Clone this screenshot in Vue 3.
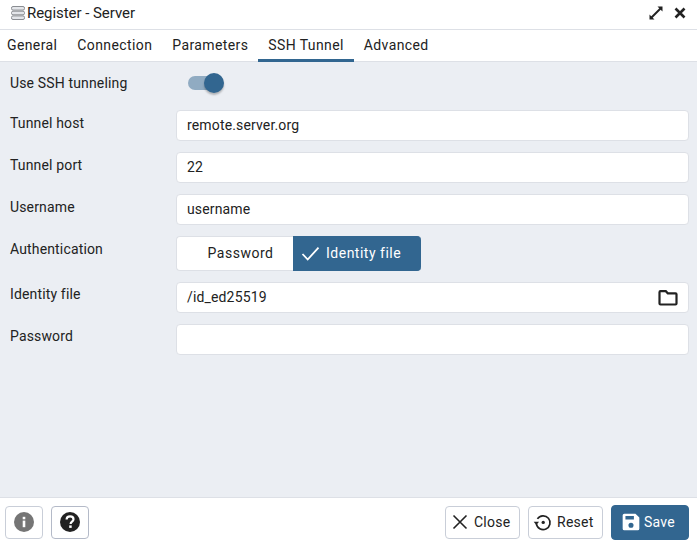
<template>
  <div class="dialog">
    <header class="title-bar">
      <div class="title">
        <svg class="server-icon" width="16" height="16" viewBox="0 0 16 16">
          <rect x="1.5" y="1.5" width="13" height="3.6" rx="1.5" />
          <rect x="1.5" y="6.2" width="13" height="3.6" rx="1.5" />
          <rect x="1.5" y="10.9" width="13" height="3.6" rx="1.5" />
        </svg>
        <span>Register - Server</span>
      </div>
      <div class="title-actions">
        <svg width="16" height="16" viewBox="0 0 16 16">
          <path d="M3.5 12.5 12.5 3.5" stroke="#222" stroke-width="2" fill="none" />
          <path d="M9.5 1.5h5v5zM1.5 9.5v5h5z" fill="#222" />
        </svg>
        <svg width="16" height="16" viewBox="0 0 16 16">
          <path d="M3.5 3.5l9 9M12.5 3.5l-9 9" stroke="#222" stroke-width="2.6" fill="none" />
        </svg>
      </div>
    </header>

    <nav class="tabs">
      <div v-for="tab in tabs" :key="tab" class="tab" :class="{ active: tab === 'SSH Tunnel' }">{{ tab }}</div>
    </nav>

    <main class="form">
      <div class="row switch-row">
        <label>Use SSH tunneling</label>
        <div class="switch">
          <div class="track"></div>
          <div class="thumb"></div>
        </div>
      </div>
      <div class="row">
        <label>Tunnel host</label>
        <div class="input">remote.server.org</div>
      </div>
      <div class="row">
        <label>Tunnel port</label>
        <div class="input">22</div>
      </div>
      <div class="row">
        <label>Username</label>
        <div class="input">username</div>
      </div>
      <div class="row">
        <label>Authentication</label>
        <div class="toggle">
          <div class="toggle-btn">Password</div>
          <div class="toggle-btn on">
            <svg width="20" height="20" viewBox="0 0 20 20">
              <path d="M1.5 11l5.2 5.5L17.5 4.6" stroke="#fff" stroke-width="1.8" fill="none" />
            </svg>
            <span>Identity file</span>
          </div>
        </div>
      </div>
      <div class="row low-label">
        <label>Identity file</label>
        <div class="input with-icon">
          <span>/id_ed25519</span>
          <svg width="24" height="24" viewBox="0 0 24 24">
            <path d="M3.5 6.2c0-.6.4-1 1-1h5.3l2 2.1h7.7c.6 0 1 .4 1 1v9.2c0 .6-.4 1-1 1h-15c-.6 0-1-.4-1-1z" fill="none" stroke="#222" stroke-width="2.2" />
          </svg>
        </div>
      </div>
      <div class="row low-label">
        <label>Password</label>
        <div class="input"></div>
      </div>
    </main>

    <footer class="footer">
      <div class="footer-group">
        <button class="icon-btn muted">
          <svg width="22" height="22" viewBox="0 0 22 22">
            <circle cx="11" cy="11" r="10" fill="#757575" />
            <rect x="9.7" y="9.6" width="2.6" height="6.6" fill="#fff" />
            <rect x="9.7" y="5.8" width="2.6" height="2.5" fill="#fff" />
          </svg>
        </button>
        <button class="icon-btn dark">
          <svg width="22" height="22" viewBox="0 0 22 22">
            <circle cx="11" cy="11" r="10" fill="#222" />
            <path d="M7.6 8.6c0-2 1.5-3.2 3.5-3.2s3.4 1.1 3.4 2.9c0 2.4-2.9 2.4-2.9 4.7" fill="none" stroke="#fff" stroke-width="2.2" />
            <rect x="10.2" y="14.4" width="2.5" height="2.5" fill="#fff" />
          </svg>
        </button>
      </div>
      <div class="footer-group">
        <button class="btn">
          <svg width="20" height="20" viewBox="0 0 20 20">
            <path d="M3.5 3.5l13 13M16.5 3.5l-13 13" stroke="#222" stroke-width="1.6" fill="none" />
          </svg>
          <span>Close</span>
        </button>
        <button class="btn">
          <svg width="20" height="20" viewBox="0 0 18 18">
            <path d="M4 6.2A6.2 6.2 0 1 1 3 10.5" fill="none" stroke="#222" stroke-width="1.5" />
            <path d="M0.6 8.8h4.8L3 11.6z" fill="#222" />
            <circle cx="9.2" cy="9.4" r="1.5" fill="#222" />
          </svg>
          <span>Reset</span>
        </button>
        <button class="btn primary">
          <svg width="20" height="20" viewBox="0 0 18 18">
            <path fill-rule="evenodd" d="M3 1.5h10L16.5 5v10a1.5 1.5 0 0 1-1.5 1.5H3A1.5 1.5 0 0 1 1.5 15V3A1.5 1.5 0 0 1 3 1.5zM4 3.6v3.2h7.6V3.6zM9 9.6a2.3 2.3 0 1 0 0 4.6 2.3 2.3 0 0 0 0-4.6z" fill="#fff" />
          </svg>
          <span>Save</span>
        </button>
      </div>
    </footer>
  </div>
</template>

<script setup>
const tabs = ["General", "Connection", "Parameters", "SSH Tunnel", "Advanced"];
</script>

<style>
html,
body {
  margin: 0;
  padding: 0;
}
</style>

<style scoped>
.dialog {
  width: 697px;
  height: 548px;
  display: flex;
  flex-direction: column;
  background: #fff;
  color: #222;
  font-family: Roboto, "Liberation Sans", sans-serif;
  font-size: 14px;
  letter-spacing: 0.15px;
  overflow: hidden;
}

.title-bar {
  height: 30px;
  flex: none;
  display: flex;
  align-items: center;
  justify-content: space-between;
  padding: 0 9px 4px 10px;
  box-sizing: border-box;
  border-bottom: 1px solid #dde0e6;
}

.title {
  display: flex;
  align-items: center;
  gap: 1px;
  font-size: 15px;
  letter-spacing: -0.05px;
}

.server-icon rect {
  fill: #e4e6ea;
  stroke: #8a8d92;
  stroke-width: 1;
}

.title-actions {
  display: flex;
  align-items: center;
  gap: 8px;
}

.tabs {
  height: 32px;
  flex: none;
  display: flex;
  box-sizing: border-box;
  border-bottom: 1px solid #dde0e6;
  letter-spacing: 0.39px;
}

.tab {
  padding: 0 10px;
  line-height: 30px;
  height: 32px;
  box-sizing: border-box;
}

.tab:first-child {
  padding-left: 7px;
}

.tab.active {
  border-bottom: 3px solid #326690;
}

.form {
  flex: 1;
  background: #ebeef3;
  padding: 5px 8px 0 10px;
  display: flex;
  flex-direction: column;
  gap: 11px;
}

.row {
  display: grid;
  grid-template-columns: 166px 1fr;
  min-height: 31px;
}

.row label {
  padding-top: 5px;
  line-height: 16px;
}

.row.low-label label {
  padding-top: 4px;
}

.switch-row {
  min-height: 34px;
  margin-bottom: -2px;
}

.switch-row label {
  padding-top: 8px;
}

.switch {
  position: relative;
  width: 36px;
  height: 34px;
  margin-left: 12px;
}

.track {
  position: absolute;
  left: 0;
  top: 9px;
  width: 34px;
  height: 14px;
  border-radius: 7px;
  background: #90abc2;
}

.thumb {
  position: absolute;
  left: 16px;
  top: 6px;
  width: 20px;
  height: 20px;
  border-radius: 50%;
  background: #326690;
  box-shadow: 0 2px 2px rgba(0, 0, 0, 0.25);
}

.input {
  height: 31px;
  box-sizing: border-box;
  background: #fff;
  border: 1px solid #dde0e6;
  border-radius: 4px;
  padding: 0 10px;
  line-height: 29px;
}

.with-icon {
  display: flex;
  align-items: center;
  justify-content: space-between;
  padding-right: 8px;
}

.toggle {
  display: flex;
  height: 35px;
  width: 245px;
}

.toggle-btn {
  width: 117px;
  box-sizing: border-box;
  background: #fff;
  border: 1px solid #dde0e6;
  border-right: 0;
  border-radius: 4px 0 0 4px;
  display: flex;
  align-items: center;
  justify-content: center;
  padding: 0 0 2px 11px;
  letter-spacing: 0.5px;
}

.toggle-btn.on {
  width: 128px;
  background: #326690;
  border-color: #326690;
  color: #fff;
  border-radius: 0 4px 4px 0;
  justify-content: flex-start;
  padding-left: 7px;
  gap: 5px;
}

.footer {
  height: 51px;
  flex: none;
  box-sizing: border-box;
  border-top: 1px solid #dde0e6;
  display: flex;
  align-items: center;
  justify-content: space-between;
  padding: 0 8px 2px 5px;
  letter-spacing: 0.25px;
}

.footer-group {
  display: flex;
  align-items: center;
  gap: 8px;
}

button {
  font: inherit;
  letter-spacing: inherit;
  height: 33px;
  box-sizing: border-box;
  background: #fff;
  color: #222;
  border: 1px solid #c9ced8;
  border-radius: 4px;
  display: flex;
  align-items: center;
  justify-content: center;
  padding: 0;
}

.icon-btn {
  width: 38px;
}

.icon-btn.dark {
  border-color: #b4bac8;
}

.btn {
  justify-content: flex-start;
  padding-left: 4px;
  gap: 4px;
  width: 75px;
}

.btn.primary {
  width: 78px;
  height: 35px;
  padding-left: 9px;
  background: #326690;
  border-color: #326690;
  color: #fff;
  gap: 3px;
}
</style>
